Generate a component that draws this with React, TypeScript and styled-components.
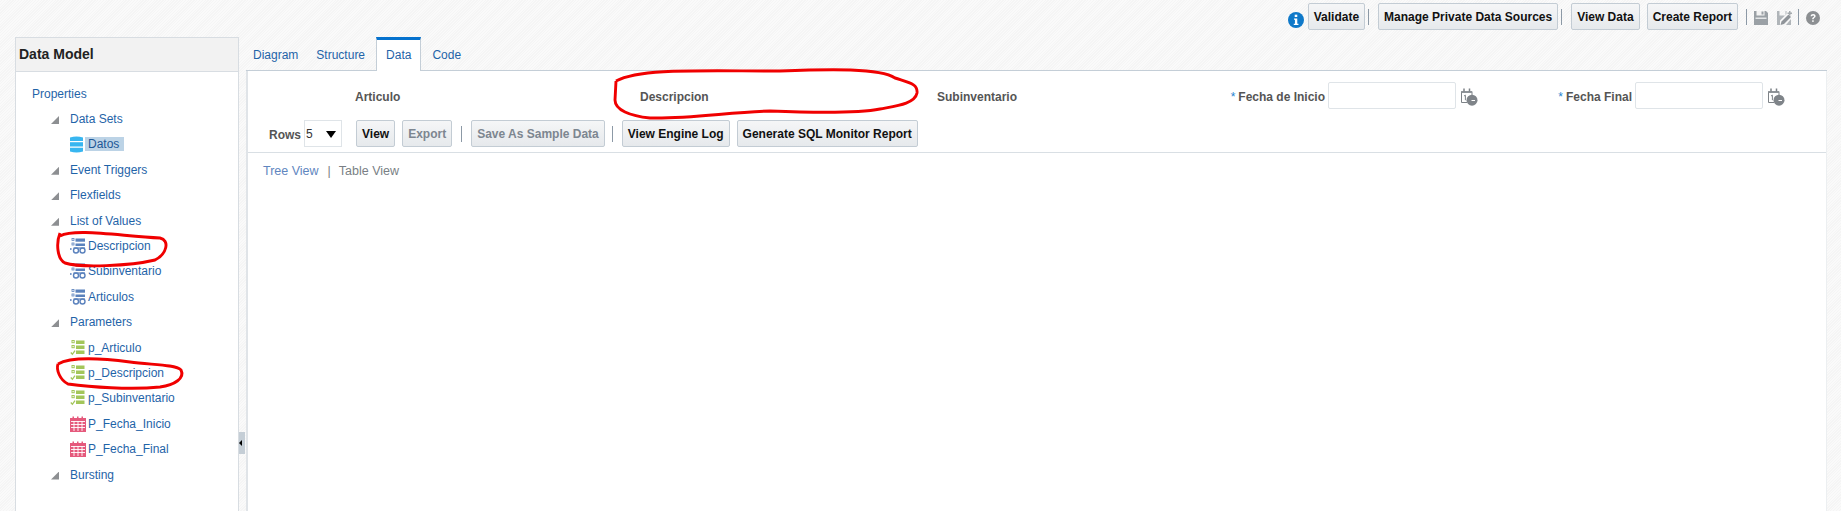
import React from "react";
import styled, { createGlobalStyle } from "styled-components";

const GlobalStyle = createGlobalStyle`
  html, body {
    margin: 0;
    padding: 0;
    height: 511px;
    overflow: hidden;
    background: #fff;
    font-family: "Liberation Sans", Arial, sans-serif;
  }
`;

const Page = styled.div`
  position: relative;
  width: 1841px;
  height: 511px;
  overflow: hidden;
  background: repeating-linear-gradient(135deg, #fafafa 0 1px, #f5f5f5 1px 2px);
`;

const TopBar = styled.div`
  height: 37px;
  box-sizing: border-box;
  padding: 3px 21px 0 0;
  display: flex;
  justify-content: flex-end;
  align-items: flex-start;
`;

const Btn = styled.div<{ $off?: boolean; $ml?: number }>`
  height: 27px;
  box-sizing: border-box;
  padding: 0 5px;
  margin-left: ${(p) => p.$ml ?? 0}px;
  display: flex;
  align-items: center;
  white-space: nowrap;
  font-size: 12px;
  font-weight: bold;
  color: ${(p) => (p.$off ? "#7d8690" : "#111")};
  background: linear-gradient(#f5f6f7, #e6e9ec);
  border: 1px solid #c3ccd4;
  border-radius: 2px;
`;

const Sep = styled.span<{ $ml: number }>`
  width: 1px;
  height: 16px;
  margin: 6px 0 0 ${(p) => p.$ml}px;
  background: #8c99a6;
  flex: none;
`;

const IconSlot = styled.span<{ $ml?: number; $w: number; $mt?: number }>`
  display: flex;
  flex: none;
  width: ${(p) => p.$w}px;
  margin-left: ${(p) => p.$ml ?? 0}px;
  margin-top: ${(p) => p.$mt ?? 8}px;
`;

const Main = styled.div`
  display: flex;
  height: 474px;
  padding-left: 15px;
`;

const Side = styled.aside`
  width: 224px;
  flex: none;
  box-sizing: border-box;
  background: #fff;
  border: 1px solid #d8dde2;
  border-bottom: none;
`;

const SideHead = styled.div`
  height: 34px;
  box-sizing: border-box;
  padding: 0 0 2px 3px;
  display: flex;
  align-items: center;
  font-size: 14px;
  font-weight: bold;
  color: #222;
  background: #f2f2f2;
  border-bottom: 1px solid #d8dde2;
`;

const Tree = styled.ul`
  list-style: none;
  margin: 0;
  padding: 9px 0 0;
`;

const Node = styled.li<{ $level: number }>`
  height: 25.4px;
  box-sizing: border-box;
  padding-left: ${(p) => [16, 35, 54][p.$level]}px;
  display: flex;
  align-items: center;
  font-size: 12px;
  color: #1f64a8;
`;

const Arrow = styled.span`
  width: 8px;
  height: 8px;
  margin: 2px 11px 0 0;
  background: #8d8f92;
  clip-path: polygon(100% 0, 100% 100%, 0 100%);
  flex: none;
`;

const NodeIcon = styled.span`
  width: 16px;
  height: 16px;
  margin-right: 2px;
  display: flex;
  flex: none;
`;

const Picked = styled.span`
  background: #bcd3e6;
  margin-left: -3px;
  padding: 0 5px 0 3px;
  line-height: 14px;
  color: #1d5796;
`;

const Splitter = styled.div`
  width: 7px;
  flex: none;
`;

const Handle = styled.div`
  width: 6px;
  height: 22px;
  margin-top: 395px;
  background: #c5ced6;
  display: flex;
  align-items: center;
`;

const HandleArrow = styled.span`
  width: 3px;
  height: 6px;
  background: #000;
  clip-path: polygon(100% 0, 100% 100%, 0 50%);
`;

const Work = styled.section`
  width: 1581px;
  flex: none;
  display: flex;
  flex-direction: column;
`;

const Tabs = styled.nav`
  height: 34px;
  box-sizing: border-box;
  display: flex;
  border-bottom: 1px solid #c4ced7;
`;

const Tab = styled.div<{ $active?: boolean }>`
  height: 34px;
  box-sizing: border-box;
  padding: ${(p) => (p.$active ? "8px 9px 0" : "11px 11px 0 7px")};
  margin-right: ${(p) => (p.$active ? 4 : 0)}px;
  font-size: 12px;
  color: #1f64a8;
  ${(p) =>
    p.$active
      ? `background:#fff;border:1px solid #c4ced7;border-top:3px solid #0572ce;border-bottom:none;`
      : ""}
`;

const Panel = styled.div`
  flex: 1;
  background: #fff;
  border-left: 2px solid #e0e4e8;
  border-right: 1px solid #eceff1;
`;

const Fields = styled.div`
  height: 49px;
  box-sizing: border-box;
  display: flex;
  align-items: center;
  padding: 3px 0 0 107px;
  font-size: 12px;
  font-weight: bold;
  color: #555;
`;

const Field = styled.div<{ $w: number; $end?: boolean; $ml?: number }>`
  width: ${(p) => p.$w}px;
  margin-left: ${(p) => p.$ml ?? 0}px;
  flex: none;
  display: flex;
  align-items: center;
  justify-content: ${(p) => (p.$end ? "flex-end" : "flex-start")};
`;

const Star = styled.span`
  color: #1f84d0;
  margin-right: 3px;
  font-weight: normal;
`;

const DateInput = styled.div`
  width: 128px;
  height: 27px;
  box-sizing: border-box;
  margin: -3px 5px 0 3px;
  background: #fff;
  border: 1px solid #dfe4e8;
  border-radius: 2px;
  flex: none;
`;

const CalSlot = styled.span`
  display: flex;
  width: 17px;
  margin-right: -1px;
  flex: none;
`;

const Actions = styled.div`
  height: 33px;
  box-sizing: border-box;
  display: flex;
  align-items: flex-start;
  padding-left: 21px;
  border-bottom: 1px solid #d9dfe4;
`;

const RowsLabel = styled.span`
  font-size: 12px;
  font-weight: bold;
  color: #555;
  margin: 8px 3px 0 0;
`;

const RowsSelect = styled.div`
  width: 38px;
  height: 27px;
  box-sizing: border-box;
  margin-right: 14px;
  padding: 0 5px 0 1px;
  display: flex;
  align-items: center;
  justify-content: space-between;
  font-size: 12px;
  color: #333;
  border: 1px solid #dfe4e8;
`;

const Caret = styled.span`
  width: 10px;
  height: 7px;
  margin-top: 2px;
  background: #000;
  clip-path: polygon(0 0, 100% 0, 50% 100%);
`;

const Views = styled.div`
  padding: 11px 0 0 15px;
  font-size: 12.5px;
  color: #7a7f85;
  display: flex;
`;

const ViewLink = styled.span`
  color: #5f86c0;
`;

const ViewSep = styled.span`
  margin: 0 8px 0 9px;
`;

const Marks = styled.svg`
  position: absolute;
  left: 0;
  top: 0;
  pointer-events: none;
`;

const Mark = styled.path`
  fill: none;
  stroke: #f00000;
  stroke-width: 2.9;
  stroke-linejoin: round;
`;

const DbIcon = () => (
  <svg width="13" height="17" viewBox="0 0 13 17">
    <path d="M0 1.500Q6.500 -0.500 13 1.500V5H0z" fill="#38b6f0" />
    <rect x="0" y="6.200" width="13" height="4.300" fill="#38b6f0" />
    <path d="M0 11.700H13V15.500Q6.500 17.500 0 15.500z" fill="#38b6f0" />
  </svg>
);

const LovIcon = () => (
  <svg width="16" height="16" viewBox="0 0 16 16">
    <rect x="2" y="0.500" width="2" height="2" fill="none" stroke="#5b82bd" strokeWidth="0.800" />
    <rect x="5.500" y="0.500" width="9.500" height="3.200" fill="#5b82bd" />
    <rect x="2" y="5" width="2" height="2" fill="none" stroke="#5b82bd" strokeWidth="0.800" />
    <rect x="5.500" y="5.500" width="9.500" height="2.500" fill="#5b82bd" />
    <circle cx="0.800" cy="11" r="0.900" fill="#5b82bd" />
    <circle cx="6" cy="12.500" r="2.500" fill="none" stroke="#5b82bd" strokeWidth="1.400" />
    <circle cx="12.500" cy="12.500" r="2.500" fill="none" stroke="#5b82bd" strokeWidth="1.400" />
    <path d="M3.500 10h11.500" stroke="#5b82bd" strokeWidth="1.200" />
  </svg>
);

const ParamIcon = () => (
  <svg width="16" height="16" viewBox="0 0 16 16">
    <rect x="2" y="0.500" width="2.200" height="2.200" fill="none" stroke="#a3c65a" strokeWidth="1" />
    <rect x="6" y="0.500" width="8.500" height="3.500" fill="#a3c65a" />
    <rect x="2" y="5.500" width="2.200" height="2.200" fill="none" stroke="#a3c65a" strokeWidth="1" />
    <rect x="6" y="5.500" width="8.500" height="3.500" fill="#a3c65a" />
    <rect x="6" y="10.500" width="8.500" height="3.500" fill="#a3c65a" />
    <path d="M0.800 12.500l1.600 1.800 2.600-3.600" fill="none" stroke="#a3c65a" strokeWidth="1.300" />
  </svg>
);

const DateParamIcon = () => (
  <svg width="16" height="16" viewBox="0 0 16 16">
    <path d="M0 2h2.500V0.500h1.500V2h3V0.500h1.500V2h3V0.500h1.500V2H16v14H0z" fill="#e5597c" />
    <path
      d="M1 5.500h14M1 8.500h14M1 11.500h14M4 5v10M8 5v10M12 5v10"
      stroke="#fff"
      strokeWidth="0.900"
    />
  </svg>
);

const InfoIcon = () => (
  <svg width="16" height="16" viewBox="0 0 15 15">
    <circle cx="7.500" cy="7.500" r="7.500" fill="#0f79c9" />
    <rect x="6.300" y="2.500" width="2.400" height="2.200" fill="#fff" />
    <path d="M5.600 6h3.100v5h1.100v1.300H5.400V11h1.100V7.300h-.9z" fill="#fff" />
  </svg>
);

const SaveIcon = () => (
  <svg width="14" height="14" viewBox="0 0 14 14">
    <path d="M0 0h12l2 2v12H0z" fill="#9aa0a5" />
    <rect x="2.500" y="0" width="8" height="4.500" fill="#f3f3f3" />
    <rect x="7.500" y="0.500" width="2" height="3" fill="#9aa0a5" />
    <rect x="1.500" y="6.500" width="11" height="1.500" fill="#e4e6e8" />
  </svg>
);

const SaveAsIcon = () => (
  <svg width="15" height="14" viewBox="0 0 15 14">
    <path d="M0 0h2.500v4.500h6V0h1v3L3 9.500V14H0z" fill="#b0b5b9" />
    <path d="M3.500 14l1-3.500L11.500 3.500l2.500 2.500-7 7z" fill="#8f9499" />
    <path d="M9 14h5V8z" fill="#b0b5b9" />
    <path d="M12 0h1.500v1.500H15V3h-1.500v1.500H12V3h-1.500V1.500H12z" fill="#a4a9ad" />
  </svg>
);

const HelpIcon = () => (
  <svg width="14" height="14" viewBox="0 0 14 14">
    <circle cx="7" cy="7" r="7" fill="#8c8f92" />
    <path
      d="M4.600 5.200C4.700 3.800 5.700 3 7.100 3c1.500 0 2.500.9 2.500 2.100 0 1-.6 1.500-1.300 2-.5.3-.6.6-.6 1.200H6.200c0-1 .3-1.500 1-2 .6-.4.9-.7.9-1.100 0-.5-.4-.8-1-.8s-1 .4-1.100.9z"
      fill="#fff"
    />
    <rect x="6.200" y="9.300" width="1.500" height="1.600" fill="#fff" />
  </svg>
);

const CalendarIcon = () => (
  <svg width="17" height="18" viewBox="0 0 17 18">
    <path d="M0.500 3.500h10.500V8M0.500 3.500V14.500h5.500" fill="none" stroke="#7d8287" strokeWidth="1" />
    <rect x="0.500" y="3" width="10.500" height="2" fill="#8f9499" />
    <path d="M3 0.500v3M8.500 0.500v3" stroke="#7d8287" strokeWidth="1.500" />
    <path d="M3 8l1.400-.8v5" fill="none" stroke="#7d8287" strokeWidth="1" />
    <circle cx="11" cy="12.200" r="5.500" fill="#7f8489" />
    <path d="M10.500 12.500h3.500" stroke="#fff" strokeWidth="1" />
  </svg>
);

const tree: { level: number; label: string; arrow?: boolean; icon?: React.ReactNode; picked?: boolean }[] = [
  { level: 0, label: "Properties" },
  { level: 1, label: "Data Sets", arrow: true },
  { level: 2, label: "Datos", icon: <DbIcon />, picked: true },
  { level: 1, label: "Event Triggers", arrow: true },
  { level: 1, label: "Flexfields", arrow: true },
  { level: 1, label: "List of Values", arrow: true },
  { level: 2, label: "Descripcion", icon: <LovIcon /> },
  { level: 2, label: "Subinventario", icon: <LovIcon /> },
  { level: 2, label: "Articulos", icon: <LovIcon /> },
  { level: 1, label: "Parameters", arrow: true },
  { level: 2, label: "p_Articulo", icon: <ParamIcon /> },
  { level: 2, label: "p_Descripcion", icon: <ParamIcon /> },
  { level: 2, label: "p_Subinventario", icon: <ParamIcon /> },
  { level: 2, label: "P_Fecha_Inicio", icon: <DateParamIcon /> },
  { level: 2, label: "P_Fecha_Final", icon: <DateParamIcon /> },
  { level: 1, label: "Bursting", arrow: true },
];

const App = () => {
  return (
    <Page>
      <GlobalStyle />
      <TopBar>
        <IconSlot $w={16} $mt={9}>
          <InfoIcon />
        </IconSlot>
        <Btn $ml={4}>Validate</Btn>
        <Sep $ml={3} />
        <Btn $ml={9}>Manage Private Data Sources</Btn>
        <Sep $ml={3} />
        <Btn $ml={9}>View Data</Btn>
        <Btn $ml={7}>Create Report</Btn>
        <Sep $ml={8} />
        <IconSlot $w={14} $ml={7}>
          <SaveIcon />
        </IconSlot>
        <IconSlot $w={15} $ml={9}>
          <SaveAsIcon />
        </IconSlot>
        <Sep $ml={6} />
        <IconSlot $w={14} $ml={7}>
          <HelpIcon />
        </IconSlot>
      </TopBar>
      <Main>
        <Side>
          <SideHead>Data Model</SideHead>
          <Tree>
            {tree.map((n) => (
              <Node key={n.label} $level={n.level}>
                {n.arrow && <Arrow />}
                {n.icon && <NodeIcon>{n.icon}</NodeIcon>}
                {n.picked ? <Picked>{n.label}</Picked> : <span>{n.label}</span>}
              </Node>
            ))}
          </Tree>
        </Side>
        <Splitter>
          <Handle>
            <HandleArrow />
          </Handle>
        </Splitter>
        <Work>
          <Tabs>
            <Tab>Diagram</Tab>
            <Tab>Structure</Tab>
            <Tab $active>Data</Tab>
            <Tab>Code</Tab>
          </Tabs>
          <Panel>
            <Fields>
              <Field $w={285}>Articulo</Field>
              <Field $w={297}>Descripcion</Field>
              <Field $w={292}>Subinventario</Field>
              <Field $w={96} $end>
                <Star>*</Star>Fecha de Inicio
              </Field>
              <DateInput />
              <CalSlot>
                <CalendarIcon />
              </CalSlot>
              <Field $w={74} $ml={81} $end>
                <Star>*</Star>Fecha Final
              </Field>
              <DateInput />
              <CalSlot>
                <CalendarIcon />
              </CalSlot>
            </Fields>
            <Actions>
              <RowsLabel>Rows</RowsLabel>
              <RowsSelect>
                5<Caret />
              </RowsSelect>
              <Btn>View</Btn>
              <Btn $off $ml={7}>
                Export
              </Btn>
              <Sep $ml={9} />
              <Btn $off $ml={9}>
                Save As Sample Data
              </Btn>
              <Sep $ml={7} />
              <Btn $ml={9}>View Engine Log</Btn>
              <Btn $ml={7}>Generate SQL Monitor Report</Btn>
            </Actions>
            <Views>
              <ViewLink>Tree View</ViewLink>
              <ViewSep>|</ViewSep>
              <span>Table View</span>
            </Views>
          </Panel>
        </Work>
      </Main>
      <Marks width="1841" height="511" viewBox="0 0 1841 511">
        <Mark d="M60 236C75 228 120 236 160 238C170 240 167 254 155 260C130 266 80 268 65 263C57 259 56 243 60 233" />
        <Mark d="M58 364C70 357 100 358 130 362C150 365 175 364 181 370C185 378 175 385 160 387C130 390 90 387 68 384C60 380 56 370 58 364" />
        <Mark d="M616 81C640 68 700 71 780 71C830 69 880 68 895 78C910 83 918 84 917 93C915 104 895 106 880 109C860 113 820 113 770 111C730 112 690 119 650 118C630 116 615 110 615 100L616 81" />
      </Marks>
    </Page>
  );
};

export default App;
